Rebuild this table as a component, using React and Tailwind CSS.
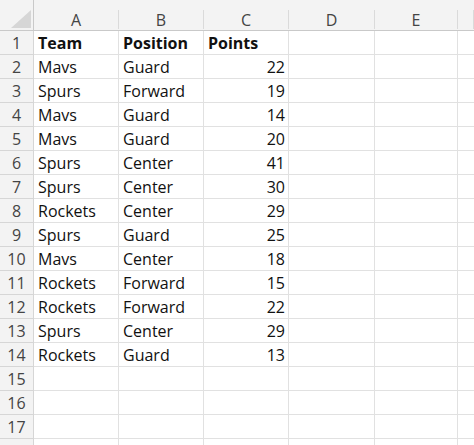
import React from "react";

const data = [
  ["Team", "Position", "Points"],
  ["Mavs", "Guard", 22],
  ["Spurs", "Forward", 19],
  ["Mavs", "Guard", 14],
  ["Mavs", "Guard", 20],
  ["Spurs", "Center", 41],
  ["Spurs", "Center", 30],
  ["Rockets", "Center", 29],
  ["Spurs", "Guard", 25],
  ["Mavs", "Center", 18],
  ["Rockets", "Forward", 15],
  ["Rockets", "Forward", 22],
  ["Spurs", "Center", 29],
  ["Rockets", "Guard", 13],
  ["", "", ""],
  ["", "", ""],
  ["", "", ""],
  ["", "", ""],
];

const cols = ["A", "B", "C", "D", "E", ""];

export default function App() {
  return (
    <div
      className="w-[474px] h-[445px] overflow-hidden bg-white text-[#111]"
      style={{ fontFamily: '"Open Sans", "Noto Sans", sans-serif' }}
    >
      <div className="grid grid-cols-[34px_85px_85px_85px_86px_83px_1fr]">
        <div className="relative h-[31px] bg-[#f3f3f3] border-r border-b border-[#c9c9c9]">
          <svg className="absolute right-[2px] bottom-[2px]" width="20" height="18" viewBox="0 0 20 18">
            <polygon points="20,0 20,18 0,18" fill="#d6d6d6" />
          </svg>
        </div>
        {cols.map((c, i) => (
          <div
            key={i}
            className="h-[31px] bg-[#f3f3f3] border-b border-[#c9c9c9] flex items-end justify-center pb-[1px] text-[16px] text-[#444]"
          >
            <div className="h-[19px] w-full border-r border-[#dadada] flex items-center justify-center leading-none">
              {c}
            </div>
          </div>
        ))}
        {data.map((row, r) => (
          <React.Fragment key={r}>
            <div className="h-[24px] bg-[#f3f3f3] border-r border-b border-[#d6d6d6] flex items-center justify-center text-[16px] text-[#444] leading-none">
              {r < 17 ? r + 1 : ""}
            </div>
            <div className={`h-[24px] border-r border-b border-[#e1e1e1] flex items-center pl-[4px] text-[16px] leading-none ${r === 0 ? "font-bold" : ""}`}>
              {row[0]}
            </div>
            <div className={`h-[24px] border-r border-b border-[#e1e1e1] flex items-center pl-[4px] text-[16px] leading-none ${r === 0 ? "font-bold" : ""}`}>
              {row[1]}
            </div>
            <div
              className={`h-[24px] border-r border-b border-[#e1e1e1] flex items-center text-[16px] leading-none ${
                r === 0 ? "font-bold pl-[4px] justify-start" : "pr-[3px] justify-end"
              }`}
            >
              {row[2]}
            </div>
            <div className="h-[24px] border-r border-b border-[#e1e1e1]" />
            <div className="h-[24px] border-r border-b border-[#e1e1e1]" />
            <div className="h-[24px] border-b border-[#e1e1e1]" />
          </React.Fragment>
        ))}
      </div>
    </div>
  );
}
